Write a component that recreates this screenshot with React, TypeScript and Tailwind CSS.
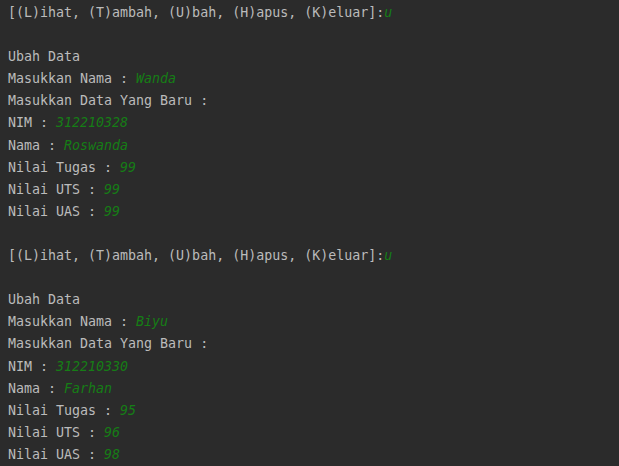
import React from 'react';

type Line = { label: string; input?: string };

const block = (nama: string, nim: string, baru: string, tugas: string, uts: string, uas: string): Line[] => [
  { label: '[(L)ihat, (T)ambah, (U)bah, (H)apus, (K)eluar]:', input: 'u' },
  { label: '' },
  { label: 'Ubah Data' },
  { label: 'Masukkan Nama : ', input: nama },
  { label: 'Masukkan Data Yang Baru :' },
  { label: 'NIM : ', input: nim },
  { label: 'Nama : ', input: baru },
  { label: 'Nilai Tugas : ', input: tugas },
  { label: 'Nilai UTS : ', input: uts },
  { label: 'Nilai UAS : ', input: uas },
];

const lines: Line[] = [
  ...block('Wanda', '312210328', 'Roswanda', '99', '99', '99'),
  { label: '' },
  ...block('Biyu', '312210330', 'Farhan', '95', '96', '98'),
];

export default function App() {
  return (
    <div className="h-[466px] w-[619px] overflow-hidden bg-[#2b2b2b] pl-2 pt-[2px] font-['DejaVu_Sans_Mono',monospace] text-[13.3px] leading-[22.1px] text-[#bbbbbb]">
      {lines.map((line, i) => (
        <div key={i} className="h-[22.1px] whitespace-pre">
          {line.label}
          {line.input && <span className="italic text-[#167d16]">{line.input}</span>}
        </div>
      ))}
    </div>
  );
}
